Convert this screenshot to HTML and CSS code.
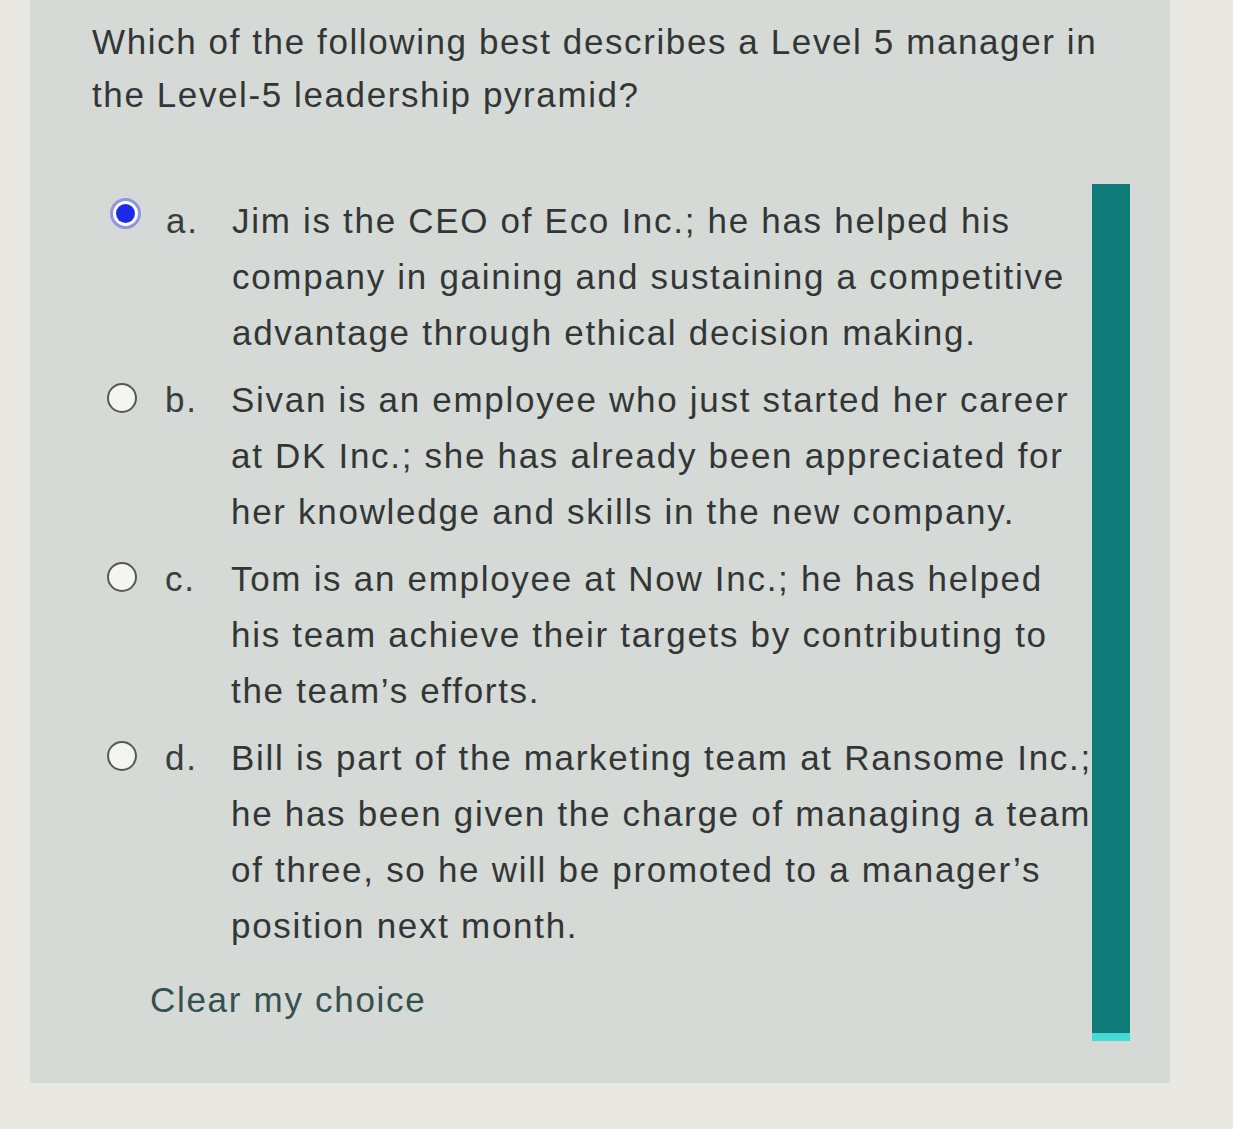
FILE: index.html
```html
<!DOCTYPE html>
<html>
<head>
<meta charset="utf-8">
<link rel="stylesheet" href="styles.css">
</head>
<body>
<div class="card">
  <p class="question">Which of the following best describes a Level 5 manager in<br>the Level-5 leadership pyramid?</p>
  <div class="answer-row">
    <div class="answers">
      <div class="option">
        <span class="radio checked"><span class="dot"></span></span>
        <span class="letter">a.</span>
        <span class="text">Jim is the CEO of Eco Inc.; he has helped his<br>company in gaining and sustaining a competitive<br>advantage through ethical decision making.</span>
      </div>
      <div class="option">
        <span class="radio"></span>
        <span class="letter">b.</span>
        <span class="text">Sivan is an employee who just started her career<br>at DK Inc.; she has already been appreciated for<br>her knowledge and skills in the new company.</span>
      </div>
      <div class="option">
        <span class="radio"></span>
        <span class="letter">c.</span>
        <span class="text">Tom is an employee at Now Inc.; he has helped<br>his team achieve their targets by contributing to<br>the team’s efforts.</span>
      </div>
      <div class="option">
        <span class="radio"></span>
        <span class="letter">d.</span>
        <span class="text">Bill is part of the marketing team at Ransome Inc.;<br>he has been given the charge of managing a team<br>of three, so he will be promoted to a manager’s<br>position next month.</span>
      </div>
      <a class="clear" href="#">Clear my choice</a>
    </div>
    <div class="bar"></div>
  </div>
</div>
</body>
</html>
```
FILE: styles.css
```css
html, body {
  margin: 0;
  padding: 0;
  background: #e9e8e2;
}
body {
  font-family: "Liberation Sans", Arial, Helvetica, sans-serif;
  color: #333636;
}
.card {
  margin-left: 30px;
  width: 1140px;
  height: 1083px;
  box-sizing: border-box;
  background: #d6dad6;
  padding: 15px 40px 0 62px;
}
.question {
  margin: 0;
  font-size: 35px;
  letter-spacing: 1.6px;
  line-height: 53px;
}
.answer-row {
  display: flex;
  margin-top: 63px;
}
.answers {
  flex: 1;
  min-width: 0;
  padding-top: 9px;
  padding-bottom: 13px;
}
.option {
  display: flex;
  align-items: flex-start;
  margin-left: 15px;
  margin-bottom: 11px;
  font-size: 35px;
  letter-spacing: 1.7px;
  line-height: 56px;
}
.radio {
  flex: none;
  width: 26px;
  height: 26px;
  margin-top: 11px;
  border: 2px solid #55585a;
  border-radius: 50%;
  background: #f4f4f1;
  display: flex;
  align-items: center;
  justify-content: center;
}
.radio.checked {
  border: 3px solid #8e95e6;
  width: 25px;
  height: 25px;
  margin-top: 5px;
  margin-left: 3px;
  margin-right: -3px;
  background: #ffffff;
}
.dot {
  width: 19px;
  height: 19px;
  border-radius: 50%;
  background: #1b2ae6;
}
.letter {
  flex: none;
  width: 66px;
  margin-left: 28px;
  color: #3a3d3d;
}
.text {
  flex: 1;
  white-space: nowrap;
}
.clear {
  display: block;
  margin-top: 18px;
  margin-left: 58px;
  font-size: 35px;
  letter-spacing: 1.7px;
  line-height: 56px;
  color: #34504f;
  text-decoration: none;
}
.bar {
  flex: none;
  width: 38px;
  margin-left: 0;
  background: #0e7b79;
  border-bottom: 8px solid #45d9d8;
}
```
